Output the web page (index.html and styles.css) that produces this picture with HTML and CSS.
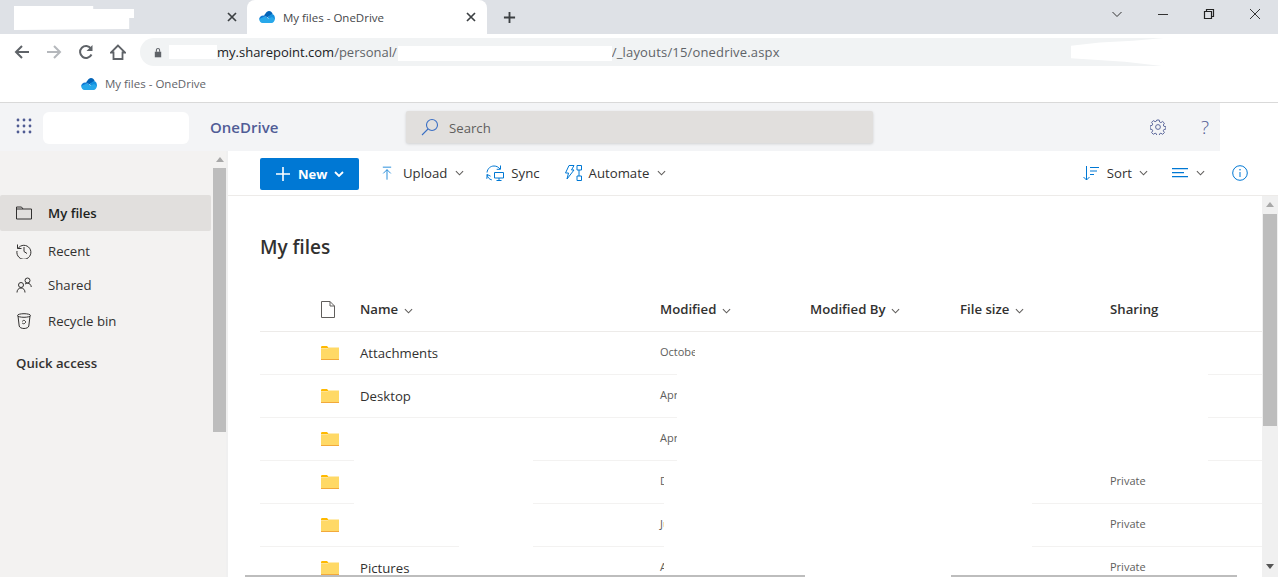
FILE: index.html
```html
<!DOCTYPE html>
<html>
  <head>
    <meta charset="utf-8">
    <title>My files - OneDrive</title>
    <link rel="stylesheet" href="styles.css">
  </head>
  <body>
    <svg class="defs" width="0" height="0">
      <symbol id="cloud" viewBox="0 0 16 12">
        <path d="M6.5 2.6C7.3 1 8.6 0 10 0c1.9 0 3.3 1.3 3.7 3.2L8.5 6.3 5 4.7c.4-.9.9-1.6 1.5-2.1z" fill="#0364b8"/>
        <path d="M5 4.7C2.6 4.2.6 5.800.2 8.100L3.500 10l5-3.700z" fill="#0f78d4"/>
        <path d="M13.700 3.200c-1.200 0-2.300.5-3.100 1.300L8.500 6.300l4.500 3.700 2.900-2c.3-2.600-.9-4.600-2.200-4.800z" fill="#1490df"/>
        <path d="M3.500 12C1.600 12 .3 10.500.2 8.100L5.500 5.500l4 2L13 6l2.900 2c-.2 2.300-1.500 4-3.400 4z" fill="#28a8ea"/>
      </symbol>
      <symbol id="chev" viewBox="0 0 10 6">
        <path d="M1 1l4 4 4-4" fill="none" stroke="currentColor"/>
      </symbol>
      <symbol id="folder" viewBox="0 0 18 14">
        <path d="M0 1.500C0 .7.500 0 1.200 0H6l2 2.200H0z" fill="#ffb900"/>
        <path d="M0 2.500h6.500L8.300 1.500H18V14H0z" fill="#ffd966"/>
        <path d="M0 13h18v1H0z" fill="#f2a93b"/>
      </symbol>
      <symbol id="tabx" viewBox="0 0 10 10">
        <path d="M1 1l8 8M9 1L1 9" stroke="#3c4043" stroke-width="1.700"/>
      </symbol>
    </svg>

    <div class="tabstrip">
      <div class="tab tab-idle">
        <svg class="tab-x"><use href="#tabx"/></svg>
      </div>
      <div class="tab tab-active">
        <svg class="favicon"><use href="#cloud"/></svg>
        <span class="tab-title">My files - OneDrive</span>
        <svg class="tab-x"><use href="#tabx"/></svg>
      </div>
      <svg class="newtab" viewBox="0 0 14 14"><path d="M7 1v12M1 7h12" stroke="#3c4043" stroke-width="2"/></svg>
      <div class="winctl">
        <svg viewBox="0 0 12 12"><path d="M1.500 4l4.500 4.500L10.500 4" fill="none" stroke="#333" stroke-width="1"/></svg>
        <svg viewBox="0 0 12 12"><path d="M1 6.500h10" stroke="#333" stroke-width="1"/></svg>
        <svg viewBox="0 0 12 12"><path d="M3.500 3V1.500h7v7H8.500M1.500 3.500h7v7h-7z" fill="none" stroke="#222" stroke-width="1.200"/></svg>
        <svg viewBox="0 0 12 12"><path d="M1 1l10 10M11 1L1 11" stroke="#333" stroke-width="1"/></svg>
      </div>
    </div>

    <div class="navbar">
      <div class="nav-btns">
        <svg viewBox="0 0 16 16"><path d="M15 8H2M8 2L2 8l6 6" fill="none" stroke="#5f6368" stroke-width="2"/></svg>
        <svg viewBox="0 0 16 16"><path d="M1 8h13M8 2l6 6-6 6" fill="none" stroke="#b5b8bc" stroke-width="2"/></svg>
        <svg viewBox="0 0 16 16"><path d="M13.500 10.500A6 6 0 1 1 13 4.500" fill="none" stroke="#5f6368" stroke-width="2"/><path d="M14.500 1v6h-6z" fill="#5f6368"/></svg>
        <svg viewBox="0 0 16 16"><path d="M8 1.500L1 8.500h2.500V15h9V8.500H15zM8 1.500" fill="none" stroke="#5f6368" stroke-width="1.800"/></svg>
      </div>
      <div class="omnibox">
        <svg class="lock" viewBox="0 0 10 12"><path d="M1 5h8v7H1z" fill="#5f6368"/><path d="M3 5V3a2 2 0 0 1 4 0v2" fill="none" stroke="#5f6368" stroke-width="1.300"/></svg>
        <span class="url"><b>my.sharepoint.com</b>/personal/<i class="url-gap"></i><span class="url-tail">/_layouts/15/onedrive.aspx</span></span>
      </div>
    </div>

    <div class="bookmarks">
      <svg class="favicon"><use href="#cloud"/></svg>
      <span>My files - OneDrive</span>
    </div>

    <header class="suite">
      <svg class="waffle" viewBox="0 0 16 16" fill="#4f5b93">
        <circle cx="2" cy="2" r="1.400"/><circle cx="8" cy="2" r="1.400"/><circle cx="14" cy="2" r="1.400"/>
        <circle cx="2" cy="8" r="1.400"/><circle cx="8" cy="8" r="1.400"/><circle cx="14" cy="8" r="1.400"/>
        <circle cx="2" cy="14" r="1.400"/><circle cx="8" cy="14" r="1.400"/><circle cx="14" cy="14" r="1.400"/>
      </svg>
      <span class="brand">OneDrive</span>
      <div class="searchbox">
        <svg viewBox="0 0 18 18"><circle cx="11" cy="7" r="5.500" fill="none" stroke="#3a6fc4" stroke-width="1.100"/><path d="M7 11l-6 6" stroke="#3a6fc4" stroke-width="1.100"/></svg>
        <span>Search</span>
      </div>
      <svg class="gear" viewBox="0 0 16 16"><path d="M6.800 1h2.400l.4 2 1.300.6 1.800-1.100 1.700 1.700-1.100 1.800.6 1.300 2 .4v2.400l-2 .4-.6 1.300 1.100 1.800-1.700 1.700-1.800-1.100-1.300.6-.4 2H6.800l-.4-2-1.300-.6-1.800 1.100-1.700-1.700 1.100-1.800-.6-1.300-2-.4V6.800l2-.4.6-1.300-1.100-1.800 1.700-1.700 1.800 1.100 1.300-.6z" fill="none" stroke="#4f5b93" stroke-width=".9"/><circle cx="8" cy="8" r="2.400" fill="none" stroke="#4f5b93" stroke-width=".9"/></svg>
      <span class="help">?</span>
    </header>

    <div class="workspace">
      <aside class="sidenav">
        <ul class="nav-list">
          <li class="nav-item active">
            <svg viewBox="0 0 16 14"><path d="M.5 1h5l1.500 2h8.500v10H.5zM.5 3H7" fill="none" stroke="#323130" stroke-width="1"/></svg>
            My files
          </li>
          <li class="nav-item item-recent">
            <svg viewBox="0 0 16 16"><path d="M2 5.500A7 7 0 1 1 1 8M1.500 1.500v4h4M8 4v4.500l3 2" fill="none" stroke="#323130" stroke-width="1"/></svg>
            Recent
          </li>
          <li class="nav-item item-shared">
            <svg viewBox="0 0 16 16"><circle cx="11.500" cy="3.500" r="2.500" fill="none" stroke="#323130"/><circle cx="5" cy="8" r="2.500" fill="none" stroke="#323130"/><path d="M1 15.500c0-2.500 1.500-4.500 4-4.500s4 2 4 4.500M9 7c.8-.5 1.500-.8 2.500-.8 2.200 0 3.500 1.600 3.800 3.800" fill="none" stroke="#323130"/></svg>
            Shared
          </li>
          <li class="nav-item item-bin">
            <svg viewBox="0 0 16 16"><ellipse cx="8" cy="2.500" rx="6.500" ry="1.800" fill="none" stroke="#323130"/><path d="M2 3l1.200 10c.2 1.500 2.500 2.500 4.800 2.500s4.600-1 4.800-2.500L14 3" fill="none" stroke="#323130"/><path d="M6 8.500l2-1.500 2 2-2 2-2-1" fill="none" stroke="#323130" stroke-width=".8"/></svg>
            Recycle bin
          </li>
        </ul>
        <div class="nav-heading">Quick access</div>
      </aside>
      <div class="scrollbar scroll-side">
        <i class="arrow-up"></i>
        <i class="thumb"></i>
      </div>

      <main class="content">
        <div class="commandbar">
          <button class="btn-new">
            <svg viewBox="0 0 16 16"><path d="M8 1v14M1 8h14" stroke="#fff" stroke-width="1.600"/></svg>
            New
            <svg class="chev-new"><use href="#chev"/></svg>
          </button>
          <span class="cmd cmd-upload">
            <svg viewBox="0 0 12 16"><path d="M1 1h10M6 16V4M1.500 8.500L6 4l4.500 4.500" fill="none" stroke="#0078d4" stroke-width="1"/></svg>
            Upload
            <svg class="chev"><use href="#chev"/></svg>
          </span>
          <span class="cmd cmd-sync">
            <svg viewBox="0 0 18 16"><path d="M1 7.500C1.500 3.500 4.500 1 8 1c2.500 0 4.500 1 6 3M14.500 .5V4.300H10.700M1 9.500c.4 2.800 2.200 4.800 4.800 5.400M.8 13.800l.4-4.300 3.400 1.700" fill="none" stroke="#0078d4" stroke-width="1"/><path d="M8.500 7.500h9v5.500h-9zM13 13v2.500M10.500 15.500h5" fill="none" stroke="#0078d4" stroke-width="1"/></svg>
            Sync
          </span>
          <span class="cmd cmd-auto">
            <svg viewBox="0 0 18 16"><path d="M5 .5h5L7.500 5H10L3 14l1.500-6H1.500zM13 .5h4.500V5H13zM13 11h4.500v4.500H13zM15 5v6" fill="none" stroke="#0078d4" stroke-width="1"/></svg>
            Automate
            <svg class="chev"><use href="#chev"/></svg>
          </span>
          <span class="cmd cmd-sort">
            <svg viewBox="0 0 16 15"><path d="M3.500 0v14M.5 11l3 3 3-3M7 1.500h9M7 5h7M7 8.500h4" fill="none" stroke="#0078d4" stroke-width="1"/></svg>
            Sort
            <svg class="chev"><use href="#chev"/></svg>
          </span>
          <span class="cmd cmd-view">
            <svg viewBox="0 0 16 10"><path d="M0 .7h16M0 4.700h12M0 8.700h16" fill="none" stroke="#0078d4" stroke-width="1.200"/></svg>
            <svg class="chev"><use href="#chev"/></svg>
          </span>
          <svg class="info" viewBox="0 0 16 16"><circle cx="8" cy="8" r="7.300" fill="none" stroke="#0078d4"/><path d="M8 7v5" stroke="#0078d4"/><circle cx="8" cy="4.700" r=".8" fill="#0078d4"/></svg>
        </div>

        <div class="listarea">
          <div class="listbody">
            <h1 class="page-title">My files</h1>
            <div class="row row-head">
              <span class="cell-icon"><svg class="file-ico" viewBox="0 0 14 17"><path d="M.5.5h8.500l4.500 4.500v11.500H.5zM9 .5V5h4.500" fill="none" stroke="#605e5c" stroke-width="1"/></svg></span>
              <span class="col">Name <svg class="chev"><use href="#chev"/></svg></span>
              <span class="col">Modified <svg class="chev"><use href="#chev"/></svg></span>
              <span class="col">Modified By <svg class="chev"><use href="#chev"/></svg></span>
              <span class="col">File size <svg class="chev"><use href="#chev"/></svg></span>
              <span class="col">Sharing</span>
            </div>
            <div class="row">
              <span class="cell-icon"><svg class="folder"><use href="#folder"/></svg></span>
              <span class="name">Attachments</span>
              <span class="meta">October 12</span><span></span><span></span><span></span>
            </div>
            <div class="row">
              <span class="cell-icon"><svg class="folder"><use href="#folder"/></svg></span>
              <span class="name">Desktop</span>
              <span class="meta">April 6</span><span></span><span></span><span></span>
            </div>
            <div class="row">
              <span class="cell-icon"><svg class="folder"><use href="#folder"/></svg></span>
              <span class="name"></span>
              <span class="meta">April 6</span><span></span><span></span><span></span>
            </div>
            <div class="row">
              <span class="cell-icon"><svg class="folder"><use href="#folder"/></svg></span>
              <span class="name"></span>
              <span class="meta">December 3</span><span></span><span></span><span class="meta">Private</span>
            </div>
            <div class="row">
              <span class="cell-icon"><svg class="folder"><use href="#folder"/></svg></span>
              <span class="name"></span>
              <span class="meta">June 2</span><span></span><span></span><span class="meta">Private</span>
            </div>
            <div class="row">
              <span class="cell-icon"><svg class="folder"><use href="#folder"/></svg></span>
              <span class="name">Pictures</span>
              <span class="meta">April 6</span><span></span><span class="meta">4 items</span><span class="meta">Private</span>
            </div>
          </div>
          <div class="scrollbar scroll-main">
            <i class="arrow-up"></i>
            <i class="thumb"></i>
            <i class="arrow-down"></i>
          </div>
        </div>
      </main>
    </div>

    <!-- scribbled-out parts of the screenshot -->
    <div class="mask m-tab"></div>
    <div class="mask m-host"></div>
    <div class="mask m-path"></div>
    <div class="mask m-omni"></div>
    <div class="mask m-tenant"></div>
    <div class="mask m-avatar"></div>
    <div class="mask m-names1"></div>
    <div class="mask m-names2"></div>
    <div class="mask m-cols1"></div>
    <div class="mask m-cols2"></div>
    <div class="mask m-cols3"></div>
    <div class="mask m-cols4"></div>
    <div class="hbar hbar1"></div>
    <div class="hbar hbar2"></div>
  </body>
</html>
```
FILE: styles.css
```css
* {
  box-sizing: border-box;
  margin: 0;
  padding: 0;
}
ul {
  list-style: none;
}
html,
body {
  height: 577px;
  overflow: hidden;
}
body {
  position: relative;
  display: flex;
  flex-direction: column;
  background: #fff;
  color: #323130;
  font-family: "Open Sans", "Noto Sans", sans-serif;
  font-size: 13.2px;
}
.defs {
  position: absolute;
}

/* browser chrome */
.tabstrip {
  display: flex;
  align-items: center;
  flex: none;
  height: 34px;
  background: #dee1e6;
}
.tab {
  display: flex;
  align-items: center;
  height: 34px;
  font-size: 11.5px;
}
.tab-idle {
  width: 247px;
  padding-right: 10px;
  justify-content: flex-end;
}
.tab-active {
  width: 240px;
  padding: 0 11px 0 12px;
  background: #fff;
  border-radius: 8px 8px 0 0;
  color: #45474a;
}
.tab-active .tab-title {
  flex: 1;
}
.tab-x {
  width: 10px;
  height: 10px;
}
.favicon {
  width: 16px;
  height: 12px;
  margin-right: 8px;
}
.newtab {
  width: 13px;
  height: 13px;
  margin-left: 16px;
}
.winctl {
  display: flex;
  gap: 34px;
  margin-left: auto;
  margin-right: 17px;
  margin-top: -6px;
}
.winctl svg {
  width: 12px;
  height: 12px;
}
.navbar {
  display: flex;
  flex: none;
  height: 32px;
  padding-top: 4px;
  background: #fff;
}
.nav-btns {
  display: flex;
  align-items: center;
  gap: 16px;
  width: 140px;
  padding-left: 14px;
  height: 28px;
}
.nav-btns svg {
  width: 16px;
  height: 16px;
}
.omnibox {
  display: flex;
  align-items: center;
  width: 1030px;
  height: 28px;
  padding-left: 14px;
  background: #f1f3f4;
  border-radius: 14px 0 0 14px;
  color: #5f6368;
  font-size: 13px;
}
.lock {
  width: 8px;
  height: 11px;
  margin-right: 55px;
}
.url b {
  font-weight: 400;
  color: #202124;
}
.url-gap {
  display: inline-block;
  width: 215px;
}
.url-tail {
  letter-spacing: .17px;
}
.bookmarks {
  display: flex;
  align-items: center;
  flex: none;
  height: 37px;
  padding-left: 81px;
  padding-bottom: 1px;
  border-bottom: 1px solid #d9d9d9;
  font-size: 11.500px;
  color: #5f6368;
}

/* suite header */
.suite {
  display: flex;
  align-items: center;
  flex: none;
  height: 48px;
  padding-left: 16px;
  background: #f3f4f6;
}
.waffle {
  width: 16px;
  height: 16px;
  margin-top: -2px;
}
.brand {
  width: 195px;
  margin-left: 178px;
  font-size: 15px;
  font-weight: 600;
  color: #505c96;
}
.searchbox {
  display: flex;
  align-items: center;
  gap: 10px;
  width: 467px;
  height: 32px;
  margin-left: 1px;
  padding-left: 15px;
  background: #e1dfdd;
  border-radius: 2px;
  box-shadow: 0 1px 3px rgba(0, 0, 0, .15);
  color: #605e5c;
}
.searchbox span {
  margin-top: 1px;
}
.searchbox svg {
  width: 18px;
  height: 18px;
}
.gear {
  width: 16px;
  height: 16px;
  margin-left: 277px;
}
.help {
  margin-left: 35px;
  font-size: 19px;
  font-weight: 300;
  color: #4f5b93;
}

/* sidebar */
.workspace {
  display: flex;
  flex: 1;
  min-height: 0;
}
.sidenav {
  width: 213px;
  padding-top: 44px;
  background: #f3f2f1;
}
.nav-item {
  display: flex;
  align-items: center;
  height: 36px;
  padding-left: 16px;
  margin-right: 2px;
  border-radius: 2px;
}
.nav-item svg {
  width: 16px;
  height: 16px;
  margin-right: 16px;
}
.nav-item.active {
  background: #e1dfdd;
  font-weight: 600;
  color: #201f1e;
}
.item-recent {
  margin-top: 2px;
}
.item-shared {
  margin-top: -2px;
}
.nav-heading {
  margin: 15px 0 0 16px;
  font-weight: 600;
}
.scrollbar {
  position: relative;
  flex: none;
  background: #f0f0f0;
}
.scroll-side {
  width: 15px;
  background: #f3f2f1;
  border-right: 2px solid #f0f0f0;
  padding: 17px 0 0;
}
.thumb {
  display: block;
  background: #bdbdbd;
}
.scroll-side .thumb {
  width: 13px;
  height: 264px;
}
.arrow-up,
.arrow-down {
  position: absolute;
  left: 50%;
  margin-left: -4px;
  border: 4px solid transparent;
  border-top: 0;
  border-bottom: 5px solid #a8a8a8;
}
.arrow-up {
  top: 6px;
}
.arrow-down {
  bottom: 8px;
  border-top: 5px solid #555;
  border-bottom: 0;
}

/* files */
.content {
  display: flex;
  flex-direction: column;
  flex: 1;
  min-width: 0;
  background: #fff;
}
.commandbar {
  display: flex;
  align-items: center;
  flex: none;
  height: 45px;
  padding-left: 32px;
  border-bottom: 1px solid #edebe9;
}
.btn-new {
  display: flex;
  align-items: center;
  width: 99px;
  height: 32px;
  margin-top: 1px;
  padding-left: 15px;
  border: 0;
  border-radius: 2px;
  background: #0078d4;
  color: #fff;
  font-family: inherit;
  font-size: 13px;
  font-weight: 700;
}
.btn-new svg {
  width: 16px;
  height: 16px;
  margin-right: 7px;
}
.btn-new .chev-new {
  width: 10px;
  height: 6px;
  margin: 1px 0 0 7px;
  stroke-width: 1.800;
}
.cmd {
  display: flex;
  align-items: center;
}
.cmd svg {
  margin-right: 8px;
}
.cmd .chev {
  margin: 0 0 0 8px;
}
.chev {
  width: 9px;
  height: 6px;
  color: #605e5c;
  stroke-width: 1.200;
}
.cmd-upload {
  margin-left: 23px;
}
.cmd-upload svg:first-child {
  width: 10px;
  height: 16px;
  margin-right: 11px;
}
.cmd-sync {
  margin-left: 22px;
}
.cmd-sync svg {
  width: 18px;
  height: 16px;
  margin-right: 7px;
}
.cmd-auto {
  margin-left: 24px;
}
.cmd-auto svg:first-child {
  width: 18px;
  height: 16px;
  margin-right: 7px;
}
.cmd-sort {
  margin-left: auto;
}
.cmd-sort svg:first-child {
  width: 16px;
  height: 15px;
}
.cmd-sort .chev {
  margin-left: 7px;
}
.cmd-view {
  margin-left: 24px;
}
.cmd-view svg:first-child {
  width: 16px;
  height: 10px;
  margin-right: 0;
}
.info {
  width: 16px;
  height: 16px;
  margin: 0 30px 0 27px;
}
.listarea {
  display: flex;
  flex: 1;
  min-height: 0;
}
.listbody {
  flex: 1;
  min-width: 0;
  padding-left: 32px;
  overflow: hidden;
}
.page-title {
  height: 93px;
  padding-top: 36px;
  font-size: 19px;
  font-weight: 600;
  line-height: 30px;
}
.row {
  display: grid;
  grid-template-columns: 100px 300px 150px 150px 150px 150px;
  align-items: center;
  height: 43px;
  border-bottom: 1px solid #f3f2f1;
}
.row-head {
  padding-bottom: 2px;
  border-bottom: 1px solid #edebe9;
  font-weight: 600;
}
.cell-icon {
  display: flex;
  padding-left: 61px;
}
.file-ico {
  width: 14px;
  height: 17px;
}
.folder {
  width: 18px;
  height: 14px;
}
.col .chev {
  margin-left: 2px;
}
.name {
  color: #323130;
}
.meta {
  margin-bottom: 3px;
  font-size: 11px;
  color: #605e5c;
}
.scroll-main {
  width: 16px;
  padding: 18px 1px 0;
}
.scroll-main .thumb {
  height: 212px;
}

/* redactions and the bottom scrollbar sit over everything else */
.mask {
  position: absolute;
  background: #fff;
}
.m-tab {
  left: 14px;
  top: 6px;
  width: 120px;
  height: 24px;
  clip-path: polygon(0 0, 66% 0, 66% 12%, 100% 12%, 100% 50%, 96% 50%, 96% 96%, 0 100%);
}
.m-host {
  left: 169px;
  top: 45px;
  width: 48px;
  height: 14px;
}
.m-path {
  left: 398px;
  top: 46px;
  width: 214px;
  height: 15px;
}
.m-omni {
  left: 1071px;
  top: 38px;
  width: 207px;
  height: 28px;
  clip-path: polygon(0 28%, 14% 16%, 30% 10%, 45% 0, 100% 0, 100% 100%, 44% 100%, 26% 85%, 0 72%);
}
.m-tenant {
  left: 43px;
  top: 112px;
  width: 146px;
  height: 32px;
  border-radius: 6px;
}
.m-avatar {
  left: 1220px;
  top: 103px;
  width: 58px;
  height: 48px;
}
.m-names1 {
  left: 354px;
  top: 418px;
  width: 179px;
  height: 88px;
}
.m-names2 {
  left: 459px;
  top: 506px;
  width: 74px;
  height: 42px;
}
.m-cols1 {
  left: 695px;
  top: 340px;
  width: 513px;
  height: 36px;
}
.m-cols2 {
  left: 677px;
  top: 373px;
  width: 531px;
  height: 88px;
}
.m-cols3 {
  left: 664px;
  top: 461px;
  width: 368px;
  height: 114px;
}
.m-cols4 {
  left: 1032px;
  top: 418px;
  width: 176px;
  height: 43px;
}
.hbar {
  position: absolute;
  top: 575px;
  height: 2px;
  background: #bdbdbd;
}
.hbar1 {
  left: 245px;
  width: 560px;
}
.hbar2 {
  left: 951px;
  width: 286px;
}
```
